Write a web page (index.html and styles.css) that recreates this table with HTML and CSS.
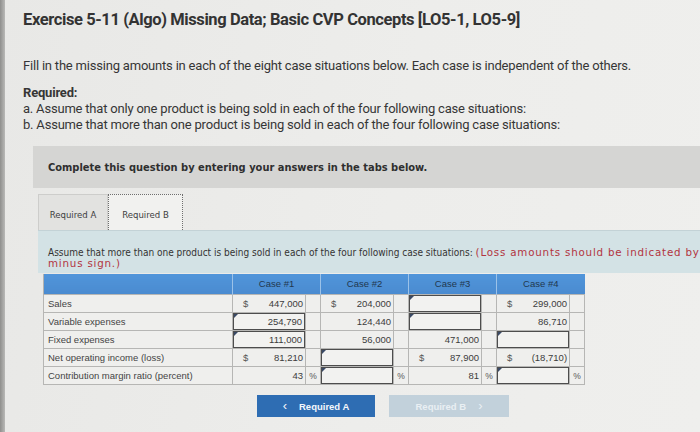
FILE: index.html
```html
<!DOCTYPE html>
<html lang="en">
<head>
<meta charset="utf-8">
<title>Exercise 5-11</title>
<link rel="stylesheet" href="styles.css">
</head>
<body>
<div class="frame">
  <div class="edge"></div>
  <main class="page">
    <h1 class="title">Exercise 5-11 (Algo) Missing Data; Basic CVP Concepts [LO5-1, LO5-9]</h1>
    <p class="intro">Fill in the missing amounts in each of the eight case situations below. Each case is independent of the others.</p>
    <div class="req">
      <div class="req-head">Required:</div>
      <div>a. Assume that only one product is being sold in each of the four following case situations:</div>
      <div>b. Assume that more than one product is being sold in each of the four following case situations:</div>
    </div>
    <div class="band">Complete this question by entering your answers in the tabs below.</div>
    <div class="tabs">
      <div class="tab">Required A</div>
      <div class="tab active">Required B</div>
    </div>
    <div class="panel">Assume that more than one product is being sold in each of the four following case situations: <span class="red">(Loss amounts should be indicated by a<br>minus sign.)</span></div>
    <div class="tabbody">
      <table class="cvp">
        <colgroup>
          <col class="c-lbl">
          <col class="c-main"><col class="c-suf">
          <col class="c-main"><col class="c-suf">
          <col class="c-main"><col class="c-suf">
          <col class="c-main"><col class="c-suf">
        </colgroup>
        <thead>
          <tr>
            <th></th>
            <th colspan="2">Case #1</th>
            <th colspan="2">Case #2</th>
            <th colspan="2">Case #3</th>
            <th colspan="2">Case #4</th>
          </tr>
        </thead>
        <tbody>
          <tr>
            <td class="lbl">Sales</td>
            <td><div class="val"><span class="cur">$</span><span>447,000</span></div></td><td></td>
            <td><div class="val"><span class="cur">$</span><span>204,000</span></div></td><td></td>
            <td class="inp"><div class="box"></div></td><td></td>
            <td><div class="val"><span class="cur">$</span><span>299,000</span></div></td><td></td>
          </tr>
          <tr>
            <td class="lbl">Variable expenses</td>
            <td class="inp"><div class="box"><span>254,790</span></div></td><td></td>
            <td><div class="val end"><span>124,440</span></div></td><td></td>
            <td class="inp"><div class="box"></div></td><td></td>
            <td><div class="val end"><span>86,710</span></div></td><td></td>
          </tr>
          <tr>
            <td class="lbl">Fixed expenses</td>
            <td class="inp"><div class="box"><span>111,000</span></div></td><td></td>
            <td><div class="val end"><span>56,000</span></div></td><td></td>
            <td><div class="val end"><span>471,000</span></div></td><td></td>
            <td class="inp"><div class="box"></div></td><td></td>
          </tr>
          <tr>
            <td class="lbl">Net operating income (loss)</td>
            <td><div class="val"><span class="cur">$</span><span>81,210</span></div></td><td></td>
            <td class="inp"><div class="box"></div></td><td></td>
            <td><div class="val"><span class="cur">$</span><span>87,900</span></div></td><td></td>
            <td><div class="val"><span class="cur">$</span><span>(18,710)</span></div></td><td></td>
          </tr>
          <tr>
            <td class="lbl">Contribution margin ratio (percent)</td>
            <td><div class="val end"><span>43</span></div></td><td class="suf">%</td>
            <td class="inp"><div class="box"></div></td><td class="suf">%</td>
            <td><div class="val end"><span>81</span></div></td><td class="suf">%</td>
            <td class="inp"><div class="box"></div></td><td class="suf">%</td>
          </tr>
        </tbody>
      </table>
      <div class="nav">
        <button class="btn prev" type="button"><span class="chev">&lsaquo;</span>Required A</button>
        <button class="btn next" type="button">Required B<span class="chev">&rsaquo;</span></button>
      </div>
    </div>
  </main>
</div>
</body>
</html>
```

FILE: styles.css
```css
html, body {
  margin: 0;
  padding: 0;
  overflow: hidden;
}

body {
  width: 700px;
  height: 432px;
  background: linear-gradient(100deg, #e8e8e6 0%, #ededeb 55%, #efefed 100%);
  font-family: "Roboto", "Liberation Sans", sans-serif;
  color: #363636;
}

.frame {
  display: flex;
  height: 432px;
}

.edge {
  flex: none;
  width: 5px;
  background: linear-gradient(to right, #8f8f8d, #b9b9b7);
}

.page {
  flex: 1;
  min-width: 0;
  padding-left: 18px;
  overflow: hidden;
}

.title {
  margin: 0;
  padding-top: 10px;
  font-size: 16.5px;
  line-height: 20px;
  font-weight: 700;
  letter-spacing: -0.4px;
  color: #333;
  white-space: nowrap;
}

.intro {
  margin: 28px 0 0;
  font-size: 13px;
  line-height: 15px;
  letter-spacing: -0.2px;
  white-space: nowrap;
}

.req {
  margin-top: 12px;
  font-size: 13px;
  line-height: 16px;
  letter-spacing: -0.2px;
  white-space: nowrap;
}

.req-head {
  font-weight: 700;
}

.band {
  margin: 13px 0 0 10px;
  height: 42px;
  box-sizing: border-box;
  padding: 15px 0 0 15px;
  background: #d5d5d3;
  font-family: "DejaVu Sans Condensed", "DejaVu Sans", sans-serif;
  font-weight: 700;
  font-size: 11px;
  line-height: 13px;
  color: #2f2f2f;
  white-space: nowrap;
}

.tabs {
  display: flex;
  margin: 6px 0 0 15px;
  height: 36px;
}

.tab {
  box-sizing: border-box;
  height: 36px;
  padding-top: 14px;
  font-family: "DejaVu Sans Condensed", "DejaVu Sans", sans-serif;
  font-size: 9.5px;
  line-height: 12px;
  color: #404040;
  text-align: center;
  width: 70px;
  background: #e2e2e0;
  border: 1px solid #cdcdcb;
  border-bottom: none;
}

.tab.active {
  width: 75px;
  background: #f1f1ef;
  border: 1px dotted #6e6e6e;
  border-bottom: none;
}

.panel {
  margin-left: 15px;
  box-sizing: border-box;
  padding: 16px 0 4px 10px;
  background: #d3e2e5;
  border-top: 1px solid #c3d2d6;
  font-family: "DejaVu Sans Condensed", "DejaVu Sans", sans-serif;
  font-size: 10px;
  line-height: 11px;
  color: #333;
  white-space: nowrap;
  overflow: hidden;
}

.red {
  font-family: "DejaVu Sans", sans-serif;
  font-size: 10.3px;
  letter-spacing: 0.8px;
  color: #b2343f;
}

.tabbody {
  margin-left: 15px;
  padding: 1px 0 0 5px;
}

.cvp {
  border-collapse: collapse;
  table-layout: fixed;
  width: 541px;
  font-family: "Liberation Sans", Arial, sans-serif;
  font-size: 9.5px;
  color: #3c3c3c;
}

.c-lbl { width: 189px; }
.c-main { width: 73px; }
.c-suf { width: 15px; }

.cvp th {
  height: 20px;
  padding: 0;
  background: linear-gradient(#5195da, #4a8bd0);
  border-left: 1px solid #9cc2e8;
  font-weight: 400;
  font-size: 9.5px;
  color: #22384f;
  text-align: center;
  vertical-align: middle;
  line-height: 12px;
}

.cvp th:first-child {
  border-left: 1px solid #b2b2b0;
}

.cvp td {
  height: 17px;
  padding: 0;
  border: 1px solid #b6b6b4;
  background: #efefed;
  vertical-align: middle;
}

.cvp td.lbl {
  padding-left: 4px;
  color: #444;
  white-space: nowrap;
}

.val {
  display: flex;
  justify-content: space-between;
  padding: 0 2px 0 10px;
}

.val.end {
  justify-content: flex-end;
}

.cur {
  color: #555;
}

.suf {
  text-align: center;
  color: #555;
  font-size: 8.5px;
}

.cvp td.inp {
  position: relative;
  padding: 0;
}

.box {
  display: flex;
  justify-content: flex-end;
  align-items: center;
  box-sizing: border-box;
  height: 17px;
  padding-right: 2px;
  border: 1px solid #4d4d4d;
  background: #f2f2f0;
}

.cvp td.inp::before {
  content: "";
  position: absolute;
  left: 1px;
  top: 1px;
  border-top: 4px solid #3a4a66;
  border-right: 4px solid transparent;
}

.nav {
  display: flex;
  gap: 14px;
  margin: 10px 0 0 214px;
}

.btn {
  display: flex;
  align-items: center;
  justify-content: center;
  gap: 12px;
  height: 22px;
  padding: 0;
  border: none;
  font-family: "Liberation Sans", Arial, sans-serif;
  font-size: 9.5px;
  font-weight: 700;
}

.btn.prev {
  width: 118px;
  background: #2e6db3;
  color: #f4f7fb;
}

.btn.next {
  width: 120px;
  background: #c2d1db;
  color: #e9eff3;
}

.chev {
  font-size: 13px;
  font-weight: 400;
  line-height: 10px;
}
```
